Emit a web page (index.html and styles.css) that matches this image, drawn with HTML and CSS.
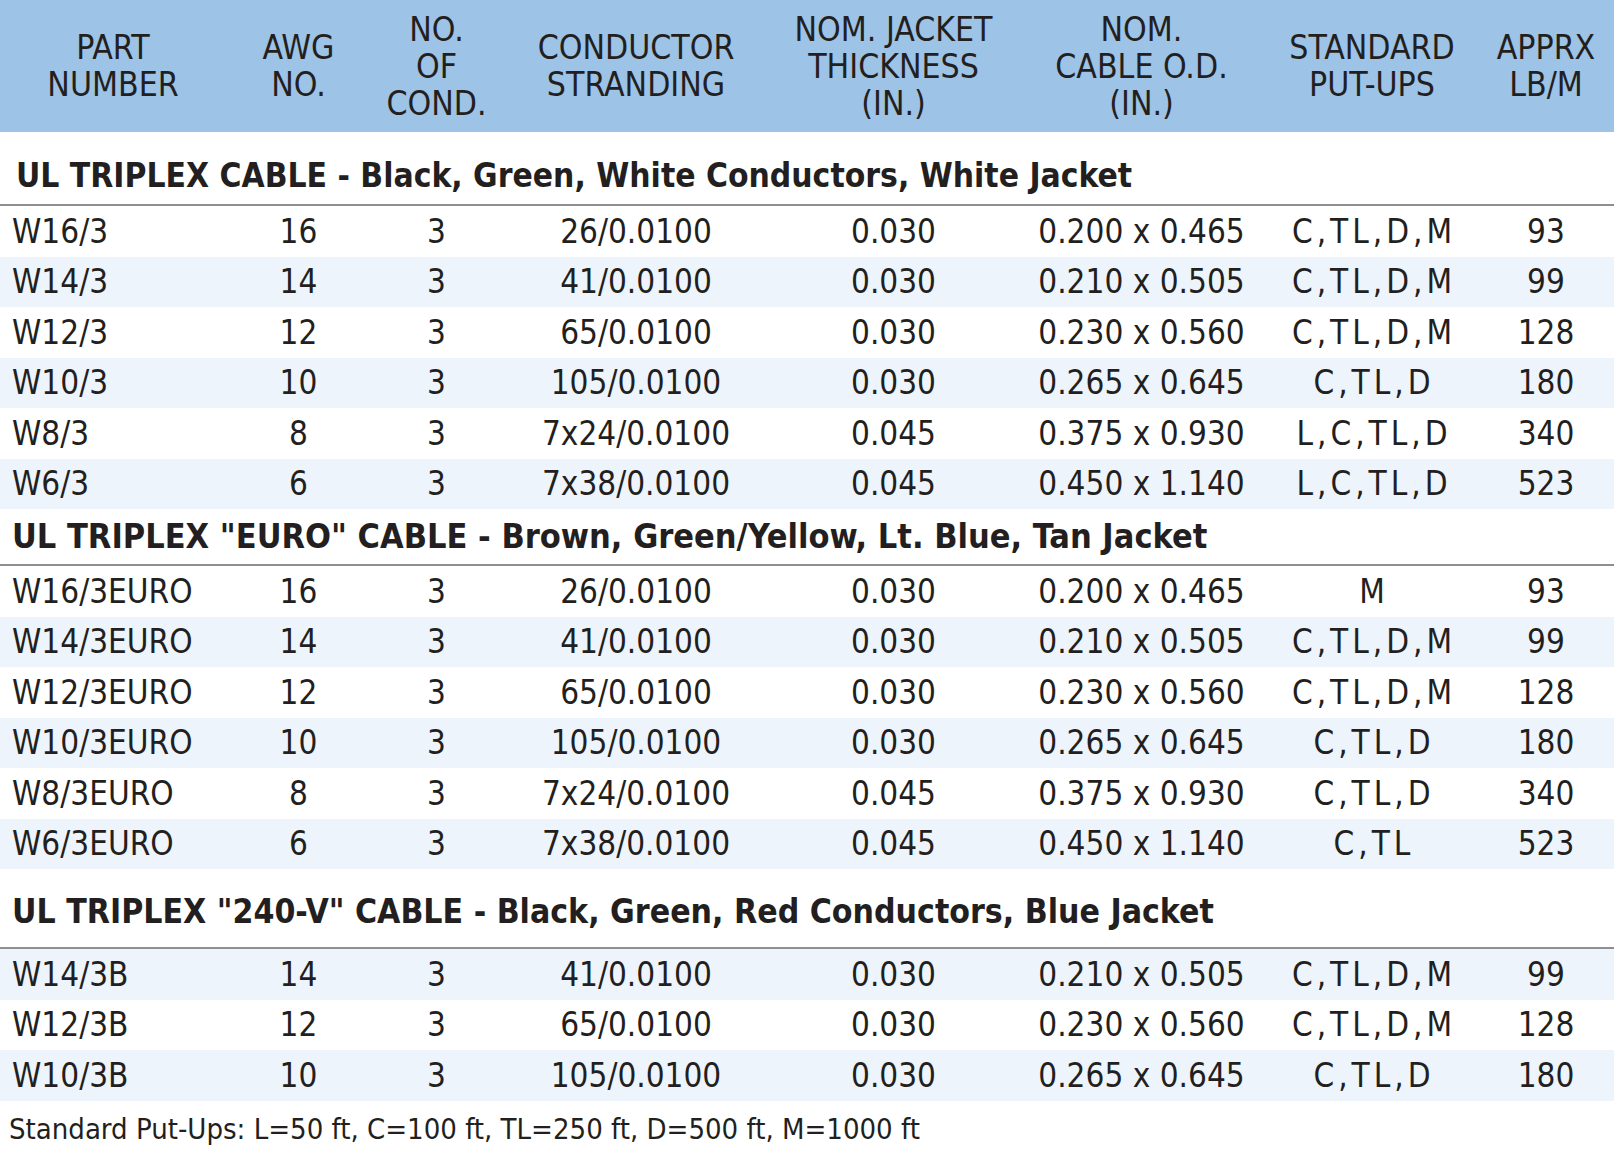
FILE: index.html
```html
<!DOCTYPE html>
<html>
<head>
<meta charset="utf-8">
<link rel="stylesheet" href="styles.css">
</head>
<body>
<table class="spec">
  <colgroup>
    <col class="c1"><col class="c2"><col class="c3"><col class="c4"><col class="c5"><col class="c6"><col class="c7"><col class="c8">
  </colgroup>
  <thead>
    <tr class="head">
      <th>PART<br>NUMBER</th>
      <th>AWG<br>NO.</th>
      <th>NO.<br>OF<br>COND.</th>
      <th>CONDUCTOR<br>STRANDING</th>
      <th>NOM. JACKET<br>THICKNESS<br>(IN.)</th>
      <th>NOM.<br>CABLE O.D.<br>(IN.)</th>
      <th>STANDARD<br>PUT-UPS</th>
      <th>APPRX<br>LB/M</th>
    </tr>
  </thead>
  <tbody>
    <tr class="section s1"><th colspan="8">UL TRIPLEX CABLE - Black, Green, White Conductors, White Jacket</th></tr>
    <tr class="row"><td>W16/3</td><td>16</td><td>3</td><td>26/0.0100</td><td>0.030</td><td>0.200 x 0.465</td><td class="pu">C,TL,D,M</td><td>93</td></tr>
    <tr class="row alt"><td>W14/3</td><td>14</td><td>3</td><td>41/0.0100</td><td>0.030</td><td>0.210 x 0.505</td><td class="pu">C,TL,D,M</td><td>99</td></tr>
    <tr class="row"><td>W12/3</td><td>12</td><td>3</td><td>65/0.0100</td><td>0.030</td><td>0.230 x 0.560</td><td class="pu">C,TL,D,M</td><td>128</td></tr>
    <tr class="row alt"><td>W10/3</td><td>10</td><td>3</td><td>105/0.0100</td><td>0.030</td><td>0.265 x 0.645</td><td class="pu">C,TL,D</td><td>180</td></tr>
    <tr class="row"><td>W8/3</td><td>8</td><td>3</td><td>7x24/0.0100</td><td>0.045</td><td>0.375 x 0.930</td><td class="pu">L,C,TL,D</td><td>340</td></tr>
    <tr class="row alt"><td>W6/3</td><td>6</td><td>3</td><td>7x38/0.0100</td><td>0.045</td><td>0.450 x 1.140</td><td class="pu">L,C,TL,D</td><td>523</td></tr>

    <tr class="section s2"><th colspan="8">UL TRIPLEX "EURO" CABLE - Brown, Green/Yellow, Lt. Blue, Tan Jacket</th></tr>
    <tr class="row"><td>W16/3EURO</td><td>16</td><td>3</td><td>26/0.0100</td><td>0.030</td><td>0.200 x 0.465</td><td class="pu">M</td><td>93</td></tr>
    <tr class="row alt"><td>W14/3EURO</td><td>14</td><td>3</td><td>41/0.0100</td><td>0.030</td><td>0.210 x 0.505</td><td class="pu">C,TL,D,M</td><td>99</td></tr>
    <tr class="row"><td>W12/3EURO</td><td>12</td><td>3</td><td>65/0.0100</td><td>0.030</td><td>0.230 x 0.560</td><td class="pu">C,TL,D,M</td><td>128</td></tr>
    <tr class="row alt"><td>W10/3EURO</td><td>10</td><td>3</td><td>105/0.0100</td><td>0.030</td><td>0.265 x 0.645</td><td class="pu">C,TL,D</td><td>180</td></tr>
    <tr class="row"><td>W8/3EURO</td><td>8</td><td>3</td><td>7x24/0.0100</td><td>0.045</td><td>0.375 x 0.930</td><td class="pu">C,TL,D</td><td>340</td></tr>
    <tr class="row alt"><td>W6/3EURO</td><td>6</td><td>3</td><td>7x38/0.0100</td><td>0.045</td><td>0.450 x 1.140</td><td class="pu">C,TL</td><td>523</td></tr>

    <tr class="section s3"><th colspan="8">UL TRIPLEX "240-V" CABLE - Black, Green, Red Conductors, Blue Jacket</th></tr>
    <tr class="row alt"><td>W14/3B</td><td>14</td><td>3</td><td>41/0.0100</td><td>0.030</td><td>0.210 x 0.505</td><td class="pu">C,TL,D,M</td><td>99</td></tr>
    <tr class="row"><td>W12/3B</td><td>12</td><td>3</td><td>65/0.0100</td><td>0.030</td><td>0.230 x 0.560</td><td class="pu">C,TL,D,M</td><td>128</td></tr>
    <tr class="row alt"><td>W10/3B</td><td>10</td><td>3</td><td>105/0.0100</td><td>0.030</td><td>0.265 x 0.645</td><td class="pu">C,TL,D</td><td>180</td></tr>
  </tbody>
</table>
<p class="note">Standard Put-Ups: L=50 ft, C=100 ft, TL=250 ft, D=500 ft, M=1000 ft</p>
</body>
</html>
```
FILE: styles.css
```css
html, body {
  margin: 0;
  padding: 0;
  background: #ffffff;
}
body {
  font-family: "DejaVu Sans Condensed", "DejaVu Sans", sans-serif;
  font-stretch: condensed;
  color: #231f20;
  width: 1614px;
}
.spec {
  width: 1614px;
  border-collapse: collapse;
  table-layout: fixed;
}
.c1 { width: 226px; }
.c2 { width: 145px; }
.c3 { width: 131px; }
.c4 { width: 268px; }
.c5 { width: 247px; }
.c6 { width: 249px; }
.c7 { width: 212px; }
.c8 { width: 136px; }

.head th {
  height: 132px;
  padding: 0;
  background: #9dc3e6;
  font-weight: normal;
  font-size: 33.5px;
  line-height: 37px;
  text-align: center;
  vertical-align: middle;
}

.section th {
  padding: 0 0 0 12px;
  text-align: left;
  font-weight: bold;
  font-size: 33.5px;
  line-height: 34px;
  vertical-align: bottom;
  border-bottom: 2px solid #8f8f8f;
}
.s1 th { height: 61px; padding-left: 16px; padding-bottom: 11px; font-size: 33.3px; }
.s2 th { height: 44px; padding-bottom: 11px; font-size: 34px; }
.s3 th { height: 60px; padding-bottom: 18px; }

.row td {
  height: 50.5px;
  padding: 0;
  font-size: 33px;
  line-height: 33px;
  text-align: center;
  vertical-align: middle;
  white-space: nowrap;
}
.row td:first-child {
  text-align: left;
  padding-left: 12px;
}
.row.alt td {
  background: #eef4fb;
}
.pu {
  letter-spacing: 4px;
  text-indent: 4px;
}
.note {
  margin: 12px 0 0 9px;
  font-size: 29px;
  line-height: 33px;
  white-space: nowrap;
}
```
